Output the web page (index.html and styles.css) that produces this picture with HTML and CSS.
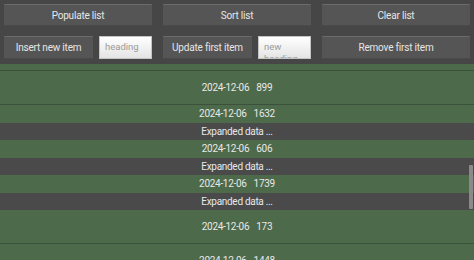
FILE: index.html
```html
<!DOCTYPE html>
<html lang="en">
<head>
    <meta charset="UTF-8">
    <meta name="viewport" content="width=device-width, initial-scale=1.0">
    <title>List demo</title>
    <link rel="stylesheet" href="styles.css">
</head>
<body>
    <!-- Toolbar -->
    <div class="toolbar">
        <div class="row">
            <button class="btn">Populate list</button>
            <button class="btn">Sort list</button>
            <button class="btn">Clear list</button>
        </div>
        <div class="row row-tall">
            <div class="group">
                <button class="btn">Insert new item</button>
                <textarea class="field" placeholder="heading"></textarea>
            </div>
            <div class="group">
                <button class="btn">Update first item</button>
                <textarea class="field" placeholder="new heading"></textarea>
            </div>
            <button class="btn">Remove first item</button>
        </div>
    </div>

    <!-- List -->
    <div class="list">
        <div class="item item-cut"></div>
        <div class="item item-tall"><span>2024-12-06</span><span class="num">899</span></div>
        <div class="item"><span>2024-12-06</span><span class="num">1632</span></div>
        <div class="expanded">Expanded data ...</div>
        <div class="item"><span>2024-12-06</span><span class="num">606</span></div>
        <div class="expanded">Expanded data ...</div>
        <div class="item"><span>2024-12-06</span><span class="num">1739</span></div>
        <div class="expanded">Expanded data ...</div>
        <div class="item item-tall"><span>2024-12-06</span><span class="num">173</span></div>
        <div class="item item-tall"><span>2024-12-06</span><span class="num">1448</span></div>

        <!-- overlay scrollbar -->
        <div class="scroll-thumb"></div>
    </div>
</body>
</html>
```

FILE: styles.css
```css
body {
    margin: 0;
    background-color: #4d6a4b; /* list green */
    font-family: Roboto, "Liberation Sans", sans-serif;
    color: #e8e8e8;
    overflow: hidden;
}

.toolbar {
    height: 64px;
    box-sizing: border-box;
    padding: 4px 4px 0;
    background-color: #464646;
    display: flex;
    flex-direction: column;
    gap: 10px;
}

.row {
    display: grid;
    grid-template-columns: repeat(3, minmax(0, 1fr));
    gap: 11px;
    height: 22px;
}

.row-tall {
    height: 23px;
}

.group {
    display: flex;
    gap: 6px;
    min-width: 0;
}

.group .btn {
    width: 89px;
    flex: none;
}

.btn {
    background-color: #555555;
    border: none;
    border-top: 1px solid #6b6b6b;
    border-bottom: 1px solid #4a4a4a;
    border-radius: 1px;
    color: #e6e6e6;
    font-family: Roboto, "Liberation Sans", sans-serif;
    font-size: 10px;
    letter-spacing: -0.2px;
    padding: 0;
    white-space: nowrap;
    cursor: pointer;
}

.field {
    flex: 1;
    width: 0;
    min-width: 0;
    height: 23px;
    box-sizing: border-box;
    margin: 0;
    padding: 4px 5px 0;
    border: 1px solid #c4c4c4;
    border-radius: 0;
    background: linear-gradient(#ffffff, #e4e4e4);
    font-family: Roboto, "Liberation Sans", sans-serif;
    font-size: 9.5px;
    line-height: 12px;
    resize: none;
    overflow: hidden;
}

.field::placeholder {
    color: #9a9a9a;
}

.list {
    position: relative;
    height: 196px;
    overflow: hidden;
    font-size: 10px;
    letter-spacing: -0.3px;
}

.item {
    height: 17.5px;
    display: flex;
    align-items: center;
    justify-content: center;
    background-color: #4d6a4b;
}

.item .num {
    margin-left: 7px;
}

.item-cut {
    height: 7px;
    box-sizing: border-box;
    border-bottom: 1px solid #3c513b;
}

.item-tall {
    height: 34px;
    box-sizing: border-box;
    border-bottom: 1px solid #3c513b;
}

.expanded {
    height: 17.5px;
    display: flex;
    align-items: center;
    justify-content: center;
    background-color: #4a4a4a;
}

.scroll-thumb {
    position: absolute;
    right: 1px;
    top: 101px;
    width: 4px;
    height: 44px;
    border-radius: 1px;
    background-color: #8a8a8a;
}
```
